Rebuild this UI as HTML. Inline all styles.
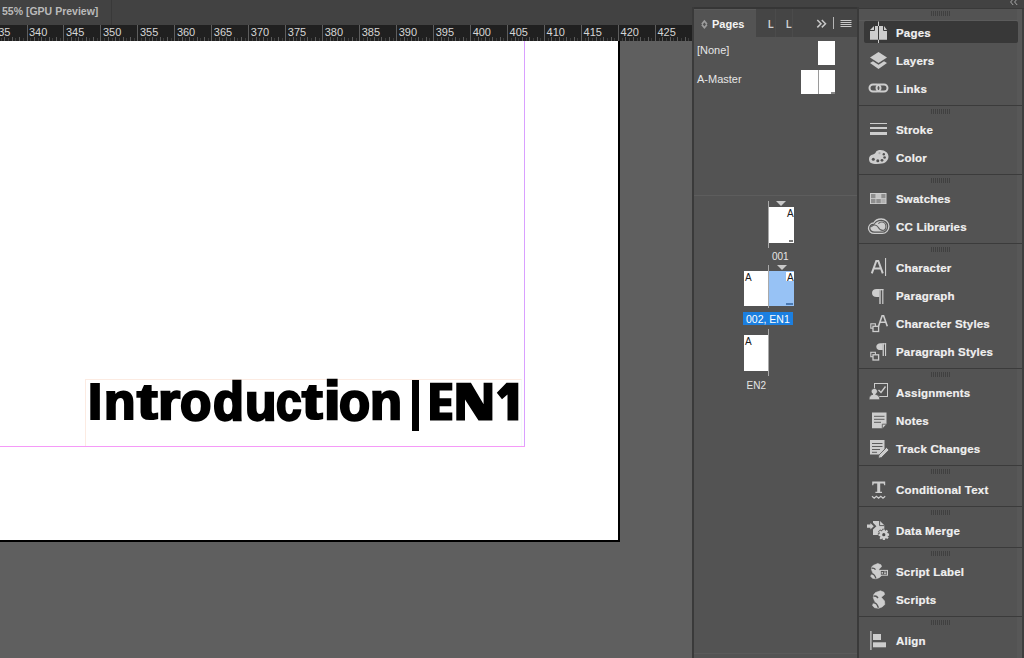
<!DOCTYPE html><html><head><meta charset="utf-8"><style>
*{box-sizing:border-box;margin:0;padding:0}
html,body{width:1024px;height:658px;overflow:hidden;background:#5f5f5f;font-family:"Liberation Sans",sans-serif}
.a{position:absolute}
svg{position:absolute;overflow:visible}
#topbar{left:0;top:0;width:1024px;height:25px;background:#424242}
#tabdiv{left:111px;top:0;width:1px;height:25px;background:#393939}
#tabtxt{left:2px;top:5px;font-size:11px;line-height:13px;font-weight:bold;color:#bababa;white-space:nowrap;transform:scaleX(0.955);transform-origin:0 0}
#ruler{left:0;top:25px;width:692px;height:16px;background:#202020;overflow:hidden}
.rt{position:absolute;top:0;width:1px;height:16px;background:#5e5e5e}
.rm{position:absolute;top:12px;width:1px;height:4px;background:#5a5a5a}
.rm2{position:absolute;top:13px;width:1px;height:3px;background:#3c3c3c}
.rl{position:absolute;top:1.3px;font-size:11px;line-height:12px;color:#d6d6d6;white-space:nowrap}
#page{left:0;top:41px;width:618px;height:499px;background:#fff}
#pgR{left:618px;top:41px;width:2px;height:501px;background:#000}
#pgB{left:0;top:540px;width:620px;height:2px;background:#000}
#mgV{left:524px;top:41px;width:1px;height:406px;background:#d9a0ff}
#mgH{left:0;top:446px;width:525px;height:1px;background:#f59af8}
#frame{left:85px;top:379px;width:437px;height:67px;border:1px solid #fcebe2;border-bottom:none;border-right-color:#f4fbfb}
.head{font-size:50px;line-height:60px;font-weight:bold;color:#000;white-space:nowrap;-webkit-text-stroke:2.2px #000;transform-origin:0 0}
#h1{left:88px;top:372.5px;transform:scaleX(1.08)}
#h2{left:428.5px;top:372.5px;transform:scaleX(0.94)}
#hbar{left:411.8px;top:380.4px;width:6.8px;height:51px;background:#000}
/* pages panel */
#pp{left:692px;top:7px;width:167px;height:651px;background:#535353}
#ppTop{left:692px;top:7px;width:167px;height:2px;background:#363636}
#ppL{left:692px;top:7px;width:2px;height:651px;background:#3a3a3a}
#ppR{left:857px;top:7px;width:2px;height:651px;background:#3a3a3a}
#ppStrip{left:756px;top:9px;width:101px;height:28px;background:#454545}
#ppTabTxt{left:712px;top:18px;font-size:11px;line-height:13px;font-weight:bold;color:#f4f4f4}
.ppL{position:absolute;font-size:11px;line-height:13px;font-weight:bold;color:#cfcfcf;transform:scaleX(0.85);transform-origin:0 0}
.ptxt{position:absolute;font-size:11px;line-height:13px;color:#e6e6e6;white-space:nowrap}
.thumb{position:absolute;background:#fff}
.spine{position:absolute;width:1px;background:#a9a9a9}
.tri{position:absolute;width:0;height:0;border-left:5px solid transparent;border-right:5px solid transparent;border-top:5px solid #c8c8c8}
.thA{position:absolute;font-size:10px;line-height:10px;color:#1a1a1a;font-weight:normal}
/* dock */
#dock{left:859px;top:8px;width:165px;height:650px;background:#535353}
#dockR{left:1018px;top:8px;width:6px;height:650px;background:#565656}
.lbl{position:absolute;left:896px;font-size:11.5px;line-height:14px;font-weight:bold;color:#f0f0f0;white-space:nowrap;-webkit-text-stroke:0.2px #f0f0f0;letter-spacing:0.2px}
.sep{position:absolute;left:859px;width:163px;height:1px;background:#3b3b3b}
.grip{position:absolute;left:931px;width:20px;height:5px;background:repeating-linear-gradient(90deg,#404040 0 1px,transparent 1px 2px)}
#hl{left:864px;top:21px;width:154px;height:22px;background:#383838;border-radius:2px}
</style></head><body>
<div id="topbar" class="a"></div><div id="tabdiv" class="a"></div>
<div id="tabtxt" class="a">55% [GPU Preview]</div>
<div id="ruler" class="a"><div class="rt" style="left:-10.47px"></div><div class="rm2" style="left:-6.77px"></div><div class="rm" style="left:-3.08px"></div><div class="rm2" style="left:0.62px"></div><div class="rm" style="left:4.32px"></div><div class="rm2" style="left:8.02px"></div><div class="rm" style="left:11.71px"></div><div class="rm2" style="left:15.41px"></div><div class="rm" style="left:19.11px"></div><div class="rm2" style="left:22.80px"></div><div class="rl" style="left:-7.97px">335</div><div class="rt" style="left:26.50px"></div><div class="rm2" style="left:30.20px"></div><div class="rm" style="left:33.89px"></div><div class="rm2" style="left:37.59px"></div><div class="rm" style="left:41.29px"></div><div class="rm2" style="left:44.98px"></div><div class="rm" style="left:48.68px"></div><div class="rm2" style="left:52.38px"></div><div class="rm" style="left:56.08px"></div><div class="rm2" style="left:59.77px"></div><div class="rl" style="left:29.00px">340</div><div class="rt" style="left:63.47px"></div><div class="rm2" style="left:67.17px"></div><div class="rm" style="left:70.86px"></div><div class="rm2" style="left:74.56px"></div><div class="rm" style="left:78.26px"></div><div class="rm2" style="left:81.95px"></div><div class="rm" style="left:85.65px"></div><div class="rm2" style="left:89.35px"></div><div class="rm" style="left:93.05px"></div><div class="rm2" style="left:96.74px"></div><div class="rl" style="left:65.97px">345</div><div class="rt" style="left:100.44px"></div><div class="rm2" style="left:104.14px"></div><div class="rm" style="left:107.83px"></div><div class="rm2" style="left:111.53px"></div><div class="rm" style="left:115.23px"></div><div class="rm2" style="left:118.92px"></div><div class="rm" style="left:122.62px"></div><div class="rm2" style="left:126.32px"></div><div class="rm" style="left:130.02px"></div><div class="rm2" style="left:133.71px"></div><div class="rl" style="left:102.94px">350</div><div class="rt" style="left:137.41px"></div><div class="rm2" style="left:141.11px"></div><div class="rm" style="left:144.80px"></div><div class="rm2" style="left:148.50px"></div><div class="rm" style="left:152.20px"></div><div class="rm2" style="left:155.89px"></div><div class="rm" style="left:159.59px"></div><div class="rm2" style="left:163.29px"></div><div class="rm" style="left:166.99px"></div><div class="rm2" style="left:170.68px"></div><div class="rl" style="left:139.91px">355</div><div class="rt" style="left:174.38px"></div><div class="rm2" style="left:178.08px"></div><div class="rm" style="left:181.77px"></div><div class="rm2" style="left:185.47px"></div><div class="rm" style="left:189.17px"></div><div class="rm2" style="left:192.87px"></div><div class="rm" style="left:196.56px"></div><div class="rm2" style="left:200.26px"></div><div class="rm" style="left:203.96px"></div><div class="rm2" style="left:207.65px"></div><div class="rl" style="left:176.88px">360</div><div class="rt" style="left:211.35px"></div><div class="rm2" style="left:215.05px"></div><div class="rm" style="left:218.74px"></div><div class="rm2" style="left:222.44px"></div><div class="rm" style="left:226.14px"></div><div class="rm2" style="left:229.83px"></div><div class="rm" style="left:233.53px"></div><div class="rm2" style="left:237.23px"></div><div class="rm" style="left:240.93px"></div><div class="rm2" style="left:244.62px"></div><div class="rl" style="left:213.85px">365</div><div class="rt" style="left:248.32px"></div><div class="rm2" style="left:252.02px"></div><div class="rm" style="left:255.71px"></div><div class="rm2" style="left:259.41px"></div><div class="rm" style="left:263.11px"></div><div class="rm2" style="left:266.81px"></div><div class="rm" style="left:270.50px"></div><div class="rm2" style="left:274.20px"></div><div class="rm" style="left:277.90px"></div><div class="rm2" style="left:281.59px"></div><div class="rl" style="left:250.82px">370</div><div class="rt" style="left:285.29px"></div><div class="rm2" style="left:288.99px"></div><div class="rm" style="left:292.68px"></div><div class="rm2" style="left:296.38px"></div><div class="rm" style="left:300.08px"></div><div class="rm2" style="left:303.77px"></div><div class="rm" style="left:307.47px"></div><div class="rm2" style="left:311.17px"></div><div class="rm" style="left:314.87px"></div><div class="rm2" style="left:318.56px"></div><div class="rl" style="left:287.79px">375</div><div class="rt" style="left:322.26px"></div><div class="rm2" style="left:325.96px"></div><div class="rm" style="left:329.65px"></div><div class="rm2" style="left:333.35px"></div><div class="rm" style="left:337.05px"></div><div class="rm2" style="left:340.75px"></div><div class="rm" style="left:344.44px"></div><div class="rm2" style="left:348.14px"></div><div class="rm" style="left:351.84px"></div><div class="rm2" style="left:355.53px"></div><div class="rl" style="left:324.76px">380</div><div class="rt" style="left:359.23px"></div><div class="rm2" style="left:362.93px"></div><div class="rm" style="left:366.62px"></div><div class="rm2" style="left:370.32px"></div><div class="rm" style="left:374.02px"></div><div class="rm2" style="left:377.72px"></div><div class="rm" style="left:381.41px"></div><div class="rm2" style="left:385.11px"></div><div class="rm" style="left:388.81px"></div><div class="rm2" style="left:392.50px"></div><div class="rl" style="left:361.73px">385</div><div class="rt" style="left:396.20px"></div><div class="rm2" style="left:399.90px"></div><div class="rm" style="left:403.59px"></div><div class="rm2" style="left:407.29px"></div><div class="rm" style="left:410.99px"></div><div class="rm2" style="left:414.69px"></div><div class="rm" style="left:418.38px"></div><div class="rm2" style="left:422.08px"></div><div class="rm" style="left:425.78px"></div><div class="rm2" style="left:429.47px"></div><div class="rl" style="left:398.70px">390</div><div class="rt" style="left:433.17px"></div><div class="rm2" style="left:436.87px"></div><div class="rm" style="left:440.56px"></div><div class="rm2" style="left:444.26px"></div><div class="rm" style="left:447.96px"></div><div class="rm2" style="left:451.65px"></div><div class="rm" style="left:455.35px"></div><div class="rm2" style="left:459.05px"></div><div class="rm" style="left:462.75px"></div><div class="rm2" style="left:466.44px"></div><div class="rl" style="left:435.67px">395</div><div class="rt" style="left:470.14px"></div><div class="rm2" style="left:473.84px"></div><div class="rm" style="left:477.53px"></div><div class="rm2" style="left:481.23px"></div><div class="rm" style="left:484.93px"></div><div class="rm2" style="left:488.62px"></div><div class="rm" style="left:492.32px"></div><div class="rm2" style="left:496.02px"></div><div class="rm" style="left:499.72px"></div><div class="rm2" style="left:503.41px"></div><div class="rl" style="left:472.64px">400</div><div class="rt" style="left:507.11px"></div><div class="rm2" style="left:510.81px"></div><div class="rm" style="left:514.50px"></div><div class="rm2" style="left:518.20px"></div><div class="rm" style="left:521.90px"></div><div class="rm2" style="left:525.60px"></div><div class="rm" style="left:529.29px"></div><div class="rm2" style="left:532.99px"></div><div class="rm" style="left:536.69px"></div><div class="rm2" style="left:540.38px"></div><div class="rl" style="left:509.61px">405</div><div class="rt" style="left:544.08px"></div><div class="rm2" style="left:547.78px"></div><div class="rm" style="left:551.47px"></div><div class="rm2" style="left:555.17px"></div><div class="rm" style="left:558.87px"></div><div class="rm2" style="left:562.56px"></div><div class="rm" style="left:566.26px"></div><div class="rm2" style="left:569.96px"></div><div class="rm" style="left:573.66px"></div><div class="rm2" style="left:577.35px"></div><div class="rl" style="left:546.58px">410</div><div class="rt" style="left:581.05px"></div><div class="rm2" style="left:584.75px"></div><div class="rm" style="left:588.44px"></div><div class="rm2" style="left:592.14px"></div><div class="rm" style="left:595.84px"></div><div class="rm2" style="left:599.53px"></div><div class="rm" style="left:603.23px"></div><div class="rm2" style="left:606.93px"></div><div class="rm" style="left:610.63px"></div><div class="rm2" style="left:614.32px"></div><div class="rl" style="left:583.55px">415</div><div class="rt" style="left:618.02px"></div><div class="rm2" style="left:621.72px"></div><div class="rm" style="left:625.41px"></div><div class="rm2" style="left:629.11px"></div><div class="rm" style="left:632.81px"></div><div class="rm2" style="left:636.50px"></div><div class="rm" style="left:640.20px"></div><div class="rm2" style="left:643.90px"></div><div class="rm" style="left:647.60px"></div><div class="rm2" style="left:651.29px"></div><div class="rl" style="left:620.52px">420</div><div class="rt" style="left:654.99px"></div><div class="rm2" style="left:658.69px"></div><div class="rm" style="left:662.38px"></div><div class="rm2" style="left:666.08px"></div><div class="rm" style="left:669.78px"></div><div class="rm2" style="left:673.48px"></div><div class="rm" style="left:677.17px"></div><div class="rm2" style="left:680.87px"></div><div class="rm" style="left:684.57px"></div><div class="rm2" style="left:688.26px"></div><div class="rl" style="left:657.49px">425</div><div class="rt" style="left:691.96px"></div><div class="rm2" style="left:695.66px"></div><div class="rm" style="left:699.35px"></div><div class="rm2" style="left:703.05px"></div><div class="rm" style="left:706.75px"></div><div class="rm2" style="left:710.45px"></div><div class="rm" style="left:714.14px"></div><div class="rm2" style="left:717.84px"></div><div class="rm" style="left:721.54px"></div><div class="rm2" style="left:725.23px"></div><div class="rl" style="left:694.46px">430</div></div>
<div id="page" class="a"></div><div id="pgR" class="a"></div><div id="pgB" class="a"></div>
<div id="mgV" class="a"></div><div id="mgH" class="a"></div><div id="frame" class="a"></div>
<div class="a head" style="left:88.36px;top:371.71px;transform:scale(1.0200,1.0081)">I</div><div class="a head" style="left:103.94px;top:371.27px;transform:scale(1.0296,1.0172)">n</div><div class="a head" style="left:136.80px;top:372.30px;transform:scale(1.2353,1.0000)">t</div><div class="a head" style="left:158.42px;top:370.78px;transform:scale(1.1389,1.0276)">r</div><div class="a head" style="left:180.47px;top:369.95px;transform:scale(1.0276,1.0552)">o</div><div class="a head" style="left:212.69px;top:369.82px;transform:scale(1.0111,1.0579)">d</div><div class="a head" style="left:245.34px;top:370.94px;transform:scale(1.0308,1.0345)">u</div><div class="a head" style="left:276.08px;top:369.95px;transform:scale(0.9192,1.0552)">c</div><div class="a head" style="left:302.30px;top:372.30px;transform:scale(1.2353,1.0000)">t</div><div class="a head" style="left:323.92px;top:368.69px;transform:scale(1.1889,1.0711)">i</div><div class="a head" style="left:338.98px;top:369.95px;transform:scale(1.0172,1.0552)">o</div><div class="a head" style="left:370.10px;top:370.78px;transform:scale(1.0481,1.0276)">n</div>
<div id="hbar" class="a"></div>
<svg style="left:0;top:0" width="1024" height="658" viewBox="0 0 1024 658"><path d="M430 382.8H452.3V390.6H439.6V398.2H451.3V406.2H439.6V412.6H452.3V420.4H430Z" fill="#000"/><path d="M456.3 382.8H470.9L483.6 404.3V382.8H492.4V420.4H478.5L465 399.4V420.4H456.3Z" fill="#000"/><path d="M506.5 382.8H518.3V420.4H507.5V394.5L502 399.3L496.8 392.8Z" fill="#000"/></svg>
<div id="pp" class="a"></div><div id="ppStrip" class="a"></div><div id="ppTop" class="a"></div><div id="ppL" class="a"></div><div id="ppR" class="a"></div>
<svg style="left:700px;top:19px" width="10" height="12" viewBox="700 19 10 12"><path d="M701.9 24.1L704.4 21L706.9 24.1M701.9 24.6L704.4 27.7L706.9 24.6" fill="none" stroke="#9c9c9c" stroke-width="1.7"/></svg>
<div id="ppTabTxt" class="a">Pages</div>
<div class="a" style="left:694px;top:9px;width:62px;height:1px;background:#5a5a5a"></div>
<div class="a" style="left:820px;top:84px;width:0;height:0"></div>
<div class="a" style="left:775px;top:9px;width:1px;height:28px;background:#4b4b4b"></div>
<div class="a" style="left:792px;top:9px;width:1px;height:28px;background:#4b4b4b"></div>
<div class="ppL" style="left:768px;top:18px">L</div><div class="ppL" style="left:786px;top:18px">L</div>
<svg style="left:816px;top:19px" width="11" height="10" viewBox="816 19 11 10"><path d="M817.3 20L821 23.7L817.3 27.4M821.8 20L825.5 23.7L821.8 27.4" fill="none" stroke="#c8c8c8" stroke-width="1.5"/></svg>
<div class="a" style="left:833px;top:17px;width:1px;height:12px;background:#b5b5b5"></div>
<svg style="left:840px;top:20px" width="12" height="8" viewBox="840 20 12 8"><rect x="840.5" y="20" width="11" height="1" fill="#cacaca"/><rect x="840.5" y="22" width="11" height="1" fill="#cacaca"/><rect x="840.5" y="24" width="11" height="1" fill="#cacaca"/><rect x="840.5" y="26" width="11" height="1" fill="#cacaca"/></svg>
<div class="ptxt" style="left:697px;top:44px">[None]</div>
<div class="ptxt" style="left:697px;top:73px">A-Master</div>
<div class="thumb" style="left:818px;top:41px;width:17px;height:24px"></div>
<div class="thumb" style="left:801px;top:70px;width:34px;height:24px"></div>
<div class="a" style="left:818px;top:70px;width:1px;height:24px;background:#9a9a9a"></div>
<div class="a" style="left:831px;top:92px;width:4px;height:2px;background:#888"></div>
<div class="a" style="left:694px;top:195px;width:163px;height:1px;background:#5d5d5d"></div>
<div class="tri" style="left:776px;top:201px"></div>
<div class="thumb" style="left:769px;top:207px;width:25px;height:36px"></div>
<div class="spine" style="left:768px;top:201px;height:47px"></div>
<div class="thA" style="left:787px;top:208.5px">A</div>
<div class="a" style="left:789px;top:240px;width:4px;height:2px;background:#777"></div>
<div class="ptxt" style="left:772px;top:250px;font-size:10px">001</div>
<div class="tri" style="left:777px;top:265px"></div>
<div class="thumb" style="left:744px;top:271px;width:25px;height:35px"></div>
<div class="thumb" style="left:769px;top:271px;width:25px;height:35px;background:#97c2f5"></div>
<div class="spine" style="left:768px;top:265px;height:43px"></div>
<div class="thA" style="left:745px;top:272.5px">A</div>
<div class="a" style="left:786px;top:272px;width:8px;height:9px;background:#fff"></div>
<div class="thA" style="left:787px;top:272.5px">A</div>
<div class="a" style="left:786px;top:303px;width:7px;height:2px;background:#4a78b0"></div>
<div class="a" style="left:743px;top:312px;width:50px;height:13px;background:#1b7fe0"></div>
<div class="ptxt" style="left:746px;top:313px;color:#fff;font-size:10.5px">002, EN1</div>
<div class="thumb" style="left:744px;top:335px;width:25px;height:36px"></div>
<div class="spine" style="left:768px;top:329px;height:47px"></div>
<div class="thA" style="left:745px;top:336.5px">A</div>
<div class="ptxt" style="left:746.5px;top:378.5px;font-size:10px">EN2</div>
<div class="a" style="left:694px;top:653px;width:163px;height:1px;background:#5a5a5a"></div>
<div id="dock" class="a"></div>
<div class="a" style="left:1017px;top:9px;width:5px;height:649px;background:#575757"></div>
<div class="a" style="left:1022px;top:9px;width:2px;height:649px;background:#3e3e3e"></div>
<div id="hl" class="a"></div>
<svg style="left:1009px;top:-2px" width="10" height="8" viewBox="1009 -2 10 8"><path d="M1013.2 -1L1010.6 2L1013.2 5M1017.2 -1L1014.6 2L1017.2 5" fill="none" stroke="#a8a8a8" stroke-width="1"/></svg>
<div class="a" style="left:859px;top:8px;width:165px;height:1px;background:#393939"></div>
<div class="a" style="left:859px;top:20px;width:159px;height:1px;background:#5b5b5b"></div>
<div class="grip" style="top:11px"></div>
<div class="lbl" style="top:25.9px">Pages</div>
<div class="lbl" style="top:53.9px">Layers</div>
<div class="lbl" style="top:81.9px">Links</div>
<div class="sep" style="top:105px"></div>
<div class="grip" style="top:109px"></div>
<div class="lbl" style="top:122.9px">Stroke</div>
<div class="lbl" style="top:150.9px">Color</div>
<div class="sep" style="top:174px"></div>
<div class="grip" style="top:178px"></div>
<div class="lbl" style="top:191.9px">Swatches</div>
<div class="lbl" style="top:219.9px">CC Libraries</div>
<div class="sep" style="top:243px"></div>
<div class="grip" style="top:247px"></div>
<div class="lbl" style="top:260.9px">Character</div>
<div class="lbl" style="top:288.9px">Paragraph</div>
<div class="lbl" style="top:316.9px">Character Styles</div>
<div class="lbl" style="top:344.9px">Paragraph Styles</div>
<div class="sep" style="top:368px"></div>
<div class="grip" style="top:372px"></div>
<div class="lbl" style="top:385.9px">Assignments</div>
<div class="lbl" style="top:413.9px">Notes</div>
<div class="lbl" style="top:441.9px">Track Changes</div>
<div class="sep" style="top:465px"></div>
<div class="grip" style="top:469px"></div>
<div class="lbl" style="top:482.9px">Conditional Text</div>
<div class="sep" style="top:506px"></div>
<div class="grip" style="top:510px"></div>
<div class="lbl" style="top:523.9px">Data Merge</div>
<div class="sep" style="top:547px"></div>
<div class="grip" style="top:551px"></div>
<div class="lbl" style="top:564.9px">Script Label</div>
<div class="lbl" style="top:592.9px">Scripts</div>
<div class="sep" style="top:616px"></div>
<div class="grip" style="top:620px"></div>
<div class="lbl" style="top:633.9px">Align</div>
<svg style="left:869px;top:21px" width="20" height="23" viewBox="869 21 20 23"><path d="M874 26H878V39.7H870V30Z M884 26H879V39.7H887V30Z" fill="#cdcdcd"/><path d="M874.5 26V30.5H870M883.5 26V30.5H887" fill="none" stroke="#383838" stroke-width="1"/><path d="M878.5 21.5V26M878.5 39.7V43" stroke="#cdcdcd" stroke-width="1"/></svg>
<svg style="left:869px;top:50px" width="20" height="20" viewBox="869 50 20 20"><path d="M870 57.5L878.5 52L887 57.5L878.5 63Z" fill="#cdcdcd"/><path d="M870 63L873 61.3L878.5 64.8L884 61.3L887 63L878.5 69Z" fill="#cdcdcd"/></svg>
<svg style="left:867px;top:82px" width="23" height="12" viewBox="867 82 23 12"><rect x="869.5" y="84.5" width="11" height="7" rx="3.5" fill="none" stroke="#cdcdcd" stroke-width="2"/><rect x="876.5" y="84.5" width="11" height="7" rx="3.5" fill="none" stroke="#cdcdcd" stroke-width="2"/></svg>
<svg style="left:869px;top:122px" width="19" height="14" viewBox="869 122 19 14"><rect x="870" y="123" width="17" height="1" fill="#cdcdcd"/><rect x="870" y="127" width="17" height="2" fill="#cdcdcd"/><rect x="870" y="132" width="17" height="3" fill="#cdcdcd"/></svg>
<svg style="left:868px;top:149px" width="22" height="16" viewBox="868 149 22 16"><path d="M869 159C869 156.5 870.5 154.8 873 154.5C874.5 154.3 875.5 153 876 151.8C876.8 150.5 878.5 150 880.5 150C885 150.2 888.5 152.8 888.5 156.5C888.5 160 886 162.8 882 163.6C878 164.3 872.5 164.2 870.5 162.8C869.4 161.8 869 160.5 869 159Z" fill="#cdcdcd"/><circle cx="873.3" cy="159.3" r="1.5" fill="#505050"/><circle cx="877.8" cy="160.8" r="1.5" fill="#505050"/><circle cx="882" cy="160.3" r="1.4" fill="#505050"/><circle cx="884.6" cy="157.5" r="1.3" fill="#505050"/><circle cx="883.8" cy="154.3" r="1.2" fill="#505050"/><circle cx="879.5" cy="153.2" r="1.1" fill="#a8a8a8"/></svg>
<svg style="left:869px;top:192px" width="18" height="13" viewBox="869 192 18 13"><rect x="870" y="193" width="16.5" height="11" fill="#cdcdcd"/><rect x="871" y="194" width="4.5" height="4.2" fill="#8e8e8e"/><rect x="876.3" y="194" width="4.5" height="4.2" fill="#c4c4c4"/><rect x="881.3" y="194" width="4.2" height="4.2" fill="#8e8e8e"/><rect x="871" y="199" width="4.5" height="4.2" fill="#8e8e8e"/><rect x="876.3" y="199" width="4.5" height="4.2" fill="#8e8e8e"/><rect x="881.3" y="199" width="4.2" height="4.2" fill="#b0b0b0"/></svg>
<svg style="left:867px;top:217px" width="24" height="18" viewBox="867 217 24 18"><path d="M874.3 233.4C870.9 233.4 868.5 231.1 868.5 228.3C868.5 225.4 870.8 223.1 873.7 223C875.1 220.5 877.9 219 881.2 219C885.5 219 888.9 222.3 888.9 226.3C888.9 230.3 886 233.4 882.2 233.4Z" fill="#535353" stroke="#cdcdcd" stroke-width="1.3"/><path d="M874.6 231.6C872.1 231.6 870.4 230 870.4 228.2C870.4 226.3 872 224.7 874.3 224.7C875.5 222.3 878 220.9 881.2 220.9C884.5 220.9 887 223.4 887 226.4C887 229.4 884.8 231.6 882 231.6Z" fill="#cdcdcd"/><path d="M871.3 227C873.2 224 876.5 224.6 878.2 227.2C879.5 229.5 880.8 230.4 882.5 230.4C884.6 230.4 885.9 228.6 885.9 226.4C885.9 223.9 884 222 881.8 222C880.3 222 879.2 222.7 878.4 223.7" fill="none" stroke="#5c5c5c" stroke-width="1.1"/></svg>
<svg style="left:870px;top:257px" width="18" height="20" viewBox="870 257 18 20"><path d="M871.8 273.3L876.3 261H878.3L882.8 273.3M873.6 268.6H881" fill="none" stroke="#cdcdcd" stroke-width="2"/><rect x="885" y="258" width="1.1" height="18" fill="#cdcdcd"/></svg>
<svg style="left:871px;top:288px" width="14" height="17" viewBox="871 288 14 17"><path d="M879.3 289H876.5C873.8 289 872 290.6 872 293C872 295.4 873.8 297 876.5 297H879.3Z" fill="#cdcdcd"/><rect x="879.3" y="289" width="1.4" height="15" fill="#cdcdcd"/><rect x="882.2" y="289" width="1.2" height="15" fill="#cdcdcd"/><rect x="879.3" y="289" width="4.1" height="1.3" fill="#cdcdcd"/></svg>
<svg style="left:869px;top:314px" width="20" height="19" viewBox="869 314 20 19"><path d="M878.5 326.3L882.1 315.8H883.6L887.3 326.3M880 322.3H885.8" fill="none" stroke="#cdcdcd" stroke-width="1.6"/><rect x="870.8" y="323.8" width="4.6" height="4.4" fill="none" stroke="#cdcdcd" stroke-width="1.1"/><rect x="873" y="326.3" width="5.6" height="5.2" fill="#535353" stroke="#cdcdcd" stroke-width="1.3"/></svg>
<svg style="left:869px;top:342px" width="20" height="19" viewBox="869 342 20 19"><path d="M882.8 343.3H880.6C878 343.3 876.3 344.6 876.3 346.7C876.3 348.8 878 350.1 880.6 350.1H882.8Z" fill="#cdcdcd"/><rect x="882.6" y="343.3" width="1.3" height="12.7" fill="#cdcdcd"/><rect x="885" y="343.3" width="1.1" height="12.7" fill="#cdcdcd"/><rect x="882.6" y="343.3" width="3.5" height="1.1" fill="#cdcdcd"/><rect x="870.8" y="352.3" width="4.6" height="4.4" fill="none" stroke="#cdcdcd" stroke-width="1.1"/><rect x="873" y="354.8" width="5.6" height="5.2" fill="#535353" stroke="#cdcdcd" stroke-width="1.3"/></svg>
<svg style="left:868px;top:382px" width="22" height="19" viewBox="868 382 22 19"><rect x="874.5" y="383.5" width="13" height="13" fill="none" stroke="#cdcdcd" stroke-width="1"/><path d="M878.5 390L881 392.5L885.5 386.5" fill="none" stroke="#cdcdcd" stroke-width="1.4"/><path d="M869 399.8C869 396 871 394.8 873 394.3C871.7 393.5 871.2 392.4 871.2 391.3C871.2 389.6 872.5 388.5 874.3 388.5C876.1 388.5 877.4 389.6 877.4 391.3C877.4 392.4 876.9 393.5 875.6 394.3C877.6 394.8 879.8 396 879.8 399.8Z" fill="#cdcdcd" stroke="#535353" stroke-width="0.8"/></svg>
<svg style="left:871px;top:412px" width="17" height="17" viewBox="871 412 17 17"><path d="M872 412.5H886.5V424L882.5 428.3H872Z" fill="#cdcdcd"/><path d="M874 416.3H884.5M874 419.3H884.5M874 422.3H881" stroke="#5c5c5c" stroke-width="1"/><path d="M882.3 428.3V424.2H886.5" fill="none" stroke="#5c5c5c" stroke-width="0.9"/></svg>
<svg style="left:869px;top:439px" width="21" height="20" viewBox="869 439 21 20"><path d="M870 440H884.5V449L880 454.6H870Z" fill="#cdcdcd"/><path d="M872 443.5H882.5M872 446.5H882.5M872 449.5H880M872 452.3H877" stroke="#5c5c5c" stroke-width="1"/><path d="M878.3 458.3L879 455L886.5 447.5L889 450L881.5 457.5Z" fill="#cdcdcd" stroke="#535353" stroke-width="0.8"/></svg>
<svg style="left:871px;top:480px" width="16" height="20" viewBox="871 480 16 20"><path d="M872.2 481.5H885.2V485.2H884.2L883.6 483.4H880.2V491.7H882V493H875.4V491.7H877.2V483.4H873.8L873.2 485.2H872.2Z" fill="#cdcdcd"/><path d="M872 496.2L874.2 498.2L876.4 496.2L878.6 498.2L880.8 496.2L883 498.2L885.2 496.2" fill="none" stroke="#cdcdcd" stroke-width="1.2"/></svg>
<svg style="left:866px;top:519px" width="25" height="23" viewBox="866 519 25 23"><path d="M867 524.6H870.4V523L873.8 526.2L870.4 529.5V527.8H867Z" fill="#cdcdcd"/><path d="M873 521H880L884.3 525.3V535H873V529.6L876.4 526.2L873 522.8Z" fill="#cdcdcd"/><path d="M879.6 521V525.6H884.3" fill="none" stroke="#5a5a5a" stroke-width="1"/><g transform="translate(883.8 534.7)"><path d="M-1 -5.3H1L1.3 -3.6L2.9 -4.9L4.3 -3.5L3.3 -1.9L5.3 -1V1L3.6 1.3L4.9 2.9L3.5 4.3L1.9 3.3L1 5.3H-1L-1.3 3.6L-2.9 4.9L-4.3 3.5L-3.3 1.9L-5.3 1V-1L-3.6 -1.3L-4.9 -2.9L-3.5 -4.3L-1.9 -3.3Z" fill="#cdcdcd" stroke="#535353" stroke-width="1.3" paint-order="stroke"/><circle r="1.6" fill="#4a4a4a"/></g></svg>
<svg style="left:869px;top:562px" width="21" height="20" viewBox="869 562 21 20"><path d="M873.5 565.3L877.8 563.5L881 564.8L881.5 566.8L878.8 569.2L881.4 572.5L881.6 575.5L879.2 577.7L876 578.8L872.5 578.3L870.7 576.3L871.4 574.4L873.3 573.7L872.2 571.6L871.4 569.3L871.8 566.7Z" fill="#cdcdcd" stroke="#cdcdcd" stroke-width="0.6" stroke-linejoin="round"/><path d="M871.6 568.3Q873.9 567.4 875.5 569.7M871.3 574Q874.3 573.5 875.9 578.4" fill="none" stroke="#535353" stroke-width="1.3"/><rect x="880.3" y="570.4" width="7.2" height="4.8" fill="#535353" stroke="#cdcdcd" stroke-width="1"/><path d="M884 572.1H886.4M884 573.6H886.4" stroke="#cdcdcd" stroke-width="0.9"/><circle cx="882.3" cy="572.8" r="0.9" fill="#cdcdcd"/></svg>
<svg style="left:871px;top:589px" width="17" height="21" viewBox="871 589 17 21"><path d="M875.5 592.5L880.5 590.8L884 592.3L884.6 594.5L881.3 597.3L884.5 601L884.8 604.5L882 607L878.5 608.3L874.5 607.7L872.5 605.5L873.3 603.3L875.5 602.5L874.2 600.2L873.3 597.5L873.8 594.5Z" fill="#cdcdcd" stroke="#cdcdcd" stroke-width="0.6" stroke-linejoin="round"/><path d="M873.6 596.3Q876.2 595.3 878 598M873.2 602.9Q876.6 602.3 878.4 607.8" fill="none" stroke="#535353" stroke-width="1.4"/></svg>
<svg style="left:869px;top:630px" width="19" height="22" viewBox="869 630 19 22"><rect x="870.3" y="631" width="1.2" height="19" fill="#cdcdcd"/><rect x="873" y="634" width="8" height="6" fill="#cdcdcd"/><rect x="873" y="642.3" width="13" height="5" fill="#cdcdcd"/></svg>
</body></html>
